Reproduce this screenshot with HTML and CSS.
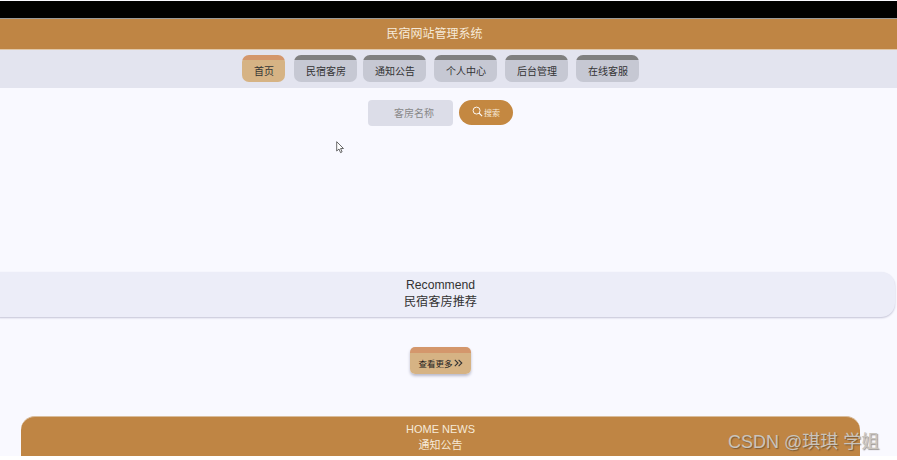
FILE: index.html
```html
<!DOCTYPE html>
<html lang="en">
<head>
    <meta charset="UTF-8">
    <meta name="viewport" content="width=device-width, initial-scale=1.0">
    <title>民宿网站管理系统</title>
    <link rel="stylesheet" href="styles.css">
</head>
<body>
    <div class="page">
        <div class="blackbar"></div>
        <header class="title">民宿网站管理系统</header>
        <nav class="nav">
            <a class="nav-item active">首页</a>
            <a class="nav-item">民宿客房</a>
            <a class="nav-item tight">通知公告</a>
            <a class="nav-item">个人中心</a>
            <a class="nav-item">后台管理</a>
            <a class="nav-item">在线客服</a>
        </nav>
        <main class="content">
            <form class="search">
                <div class="search-input">客房名称</div>
                <button class="search-btn" type="button">
                    <svg class="search-icon" viewBox="0 0 12 12" width="11" height="11">
                        <circle cx="5" cy="5" r="3.8" fill="none" stroke="#fff" stroke-width="1"/>
                        <path d="M7.8 7.8L11 11" stroke="#fff" stroke-width="1.3" fill="none"/>
                    </svg>
                    <span>搜索</span>
                </button>
            </form>
            <section class="recommend">
                <div>Recommend</div>
                <div>民宿客房推荐</div>
            </section>
            <div class="more-row">
                <a class="more-btn">查看更多<svg class="more-icon" viewBox="0 0 9 8" width="9" height="8"><path d="M.8.8L4 4 .8 7.2M4.6.8L7.8 4 4.6 7.2" fill="none" stroke="#333" stroke-width="1.1"/></svg></a>
            </div>
            <section class="news">
                <div>HOME NEWS</div>
                <div>通知公告</div>
            </section>
        </main>
        <svg class="cursor" viewBox="0 0 9 13" width="9" height="13">
            <path d="M.7.7V10L3 8l1.5 3.6 1.6-.7L4.6 7.500H7.500Z" fill="#fff" stroke="#444" stroke-width=".8"/>
        </svg>
        <div class="watermark">CSDN @琪琪 学姐</div>
    </div>
</body>
</html>
```

FILE: styles.css
```css
* {
    box-sizing: border-box;
}

html, body {
    margin: 0;
    padding: 0;
    background-color: #fff;
}

body {
    font-family: "Liberation Sans", "Noto Sans CJK SC", sans-serif;
    overflow: hidden;
}

.page {
    position: relative;
    height: 456px;
    overflow: hidden;
    background-color: #f9f9ff;
}

.blackbar {
    height: 18px;
    margin-top: 1px;
    background-color: #000;
    border-bottom: 1px solid #999;
}

.title {
    height: 31px;
    padding-right: 28px;
    line-height: 30px;
    text-align: center;
    font-size: 12px;
    color: #f6ead9;
    background-color: #bf8544;
    border-bottom: 1px solid #e0c7a8;
}

.nav {
    display: flex;
    justify-content: center;
    gap: 8px;
    height: 38px;
    padding: 5px 16px 0 0;
    background-color: #e3e4ef;
}

.nav-item {
    width: 63px;
    height: 27px;
    padding: 6px 0 0 1px;
    line-height: 21px;
    text-align: center;
    font-size: 10px;
    color: #333;
    background: linear-gradient(#808080 5px, #c6c8d3 5px);
    border-radius: 7px;
}

.nav-item.active {
    width: 43px;
    margin-right: 1px;
    background: linear-gradient(#d4976c 5px, #d6b384 5px);
}

.nav-item.tight {
    margin-left: -2px;
}

.content {
    padding-top: 12px;
}

.search {
    display: flex;
    justify-content: center;
    gap: 6px;
    height: 26px;
    padding-right: 16px;
}

.search-input {
    width: 85px;
    height: 26px;
    padding: 1px 0 0 7px;
    line-height: 25px;
    text-align: center;
    font-size: 10px;
    color: #888;
    background-color: #dcdde8;
    border-radius: 4px;
}

.search-btn {
    display: flex;
    align-items: center;
    justify-content: center;
    gap: 1px;
    width: 54px;
    height: 25px;
    padding: 0 0 1px;
    border: none;
    border-radius: 13px;
    font-family: inherit;
    font-size: 8px;
    color: #f6ead9;
    background-color: #c48841;
}

.search-icon {
    margin-top: -2px;
}

.recommend {
    width: 909px;
    height: 45px;
    margin: 146px 0 0 -14px;
    padding-top: 5px;
    line-height: 17px;
    text-align: center;
    font-size: 12.200px;
    color: #333;
    background-color: #ecedf8;
    border-radius: 14px;
    box-shadow: 0 1px 2px #c3c3d6;
}

.more-row {
    display: flex;
    justify-content: center;
    padding: 30px 16px 0 0;
}

.more-btn {
    display: flex;
    align-items: center;
    justify-content: center;
    width: 61px;
    height: 27px;
    padding-top: 5px;
    font-size: 8.500px;
    color: #222;
    background: linear-gradient(#d4976c 6px, #d6b384 6px);
    border-radius: 5px;
    box-shadow: 0 2px 3px #b9b9c9;
}

.more-icon {
    margin-left: 1px;
}

.news {
    width: 839px;
    height: 56px;
    margin: 42px 0 0 21px;
    padding-top: 4px;
    line-height: 16px;
    text-align: center;
    font-size: 11px;
    color: #f6ead9;
    background-color: #bf8544;
    border-top: 1px solid #d9bd9c;
    border-radius: 14px;
}

.cursor {
    position: absolute;
    left: 336px;
    top: 141px;
}

.watermark {
    position: absolute;
    left: 728px;
    top: 431px;
    font-size: 18px;
    line-height: 22px;
    white-space: nowrap;
    color: #c9c4bd;
    text-shadow: 1px 1px 1px rgba(60, 50, 40, .5);
}
```
